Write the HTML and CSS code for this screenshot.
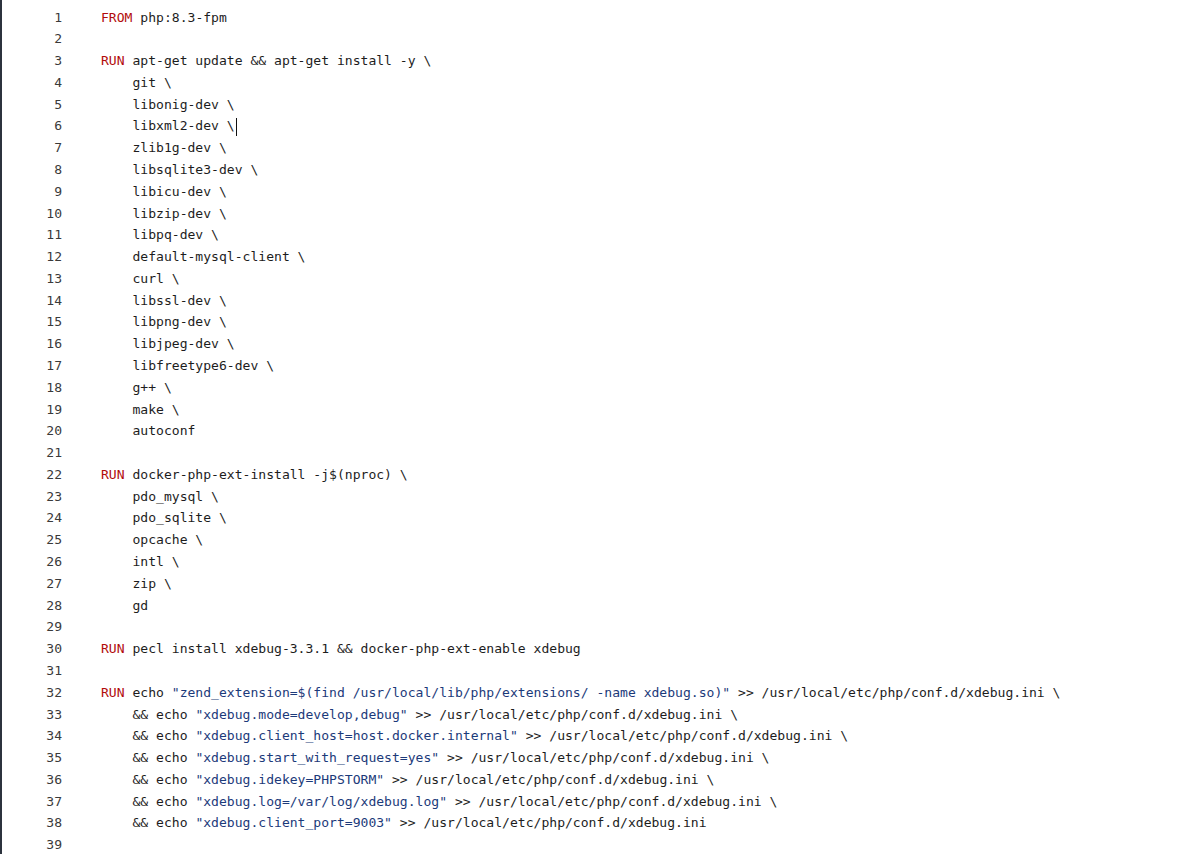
FILE: index.html
```html
<!DOCTYPE html>
<html>
<head>
<meta charset="utf-8">
<link rel="stylesheet" href="styles.css">
</head>
<body>
<div class="editor">
<div class="line"><span class="ln">1</span><span class="code"><span class="kw">FROM</span> php:8.3-fpm</span></div>
<div class="line"><span class="ln">2</span><span class="code"></span></div>
<div class="line"><span class="ln">3</span><span class="code"><span class="kw">RUN</span> apt-get update &amp;&amp; apt-get install -y \</span></div>
<div class="line"><span class="ln">4</span><span class="code">    git \</span></div>
<div class="line"><span class="ln">5</span><span class="code">    libonig-dev \</span></div>
<div class="line"><span class="ln">6</span><span class="code">    libxml2-dev \<span class="cursor"></span></span></div>
<div class="line"><span class="ln">7</span><span class="code">    zlib1g-dev \</span></div>
<div class="line"><span class="ln">8</span><span class="code">    libsqlite3-dev \</span></div>
<div class="line"><span class="ln">9</span><span class="code">    libicu-dev \</span></div>
<div class="line"><span class="ln">10</span><span class="code">    libzip-dev \</span></div>
<div class="line"><span class="ln">11</span><span class="code">    libpq-dev \</span></div>
<div class="line"><span class="ln">12</span><span class="code">    default-mysql-client \</span></div>
<div class="line"><span class="ln">13</span><span class="code">    curl \</span></div>
<div class="line"><span class="ln">14</span><span class="code">    libssl-dev \</span></div>
<div class="line"><span class="ln">15</span><span class="code">    libpng-dev \</span></div>
<div class="line"><span class="ln">16</span><span class="code">    libjpeg-dev \</span></div>
<div class="line"><span class="ln">17</span><span class="code">    libfreetype6-dev \</span></div>
<div class="line"><span class="ln">18</span><span class="code">    g++ \</span></div>
<div class="line"><span class="ln">19</span><span class="code">    make \</span></div>
<div class="line"><span class="ln">20</span><span class="code">    autoconf</span></div>
<div class="line"><span class="ln">21</span><span class="code"></span></div>
<div class="line"><span class="ln">22</span><span class="code"><span class="kw">RUN</span> docker-php-ext-install -j$(nproc) \</span></div>
<div class="line"><span class="ln">23</span><span class="code">    pdo_mysql \</span></div>
<div class="line"><span class="ln">24</span><span class="code">    pdo_sqlite \</span></div>
<div class="line"><span class="ln">25</span><span class="code">    opcache \</span></div>
<div class="line"><span class="ln">26</span><span class="code">    intl \</span></div>
<div class="line"><span class="ln">27</span><span class="code">    zip \</span></div>
<div class="line"><span class="ln">28</span><span class="code">    gd</span></div>
<div class="line"><span class="ln">29</span><span class="code"></span></div>
<div class="line"><span class="ln">30</span><span class="code"><span class="kw">RUN</span> pecl install xdebug-3.3.1 &amp;&amp; docker-php-ext-enable xdebug</span></div>
<div class="line"><span class="ln">31</span><span class="code"></span></div>
<div class="line"><span class="ln">32</span><span class="code"><span class="kw">RUN</span> echo <span class="str">"zend_extension=$(find /usr/local/lib/php/extensions/ -name xdebug.so)"</span> &gt;&gt; /usr/local/etc/php/conf.d/xdebug.ini \</span></div>
<div class="line"><span class="ln">33</span><span class="code">    &amp;&amp; echo <span class="str">"xdebug.mode=develop,debug"</span> &gt;&gt; /usr/local/etc/php/conf.d/xdebug.ini \</span></div>
<div class="line"><span class="ln">34</span><span class="code">    &amp;&amp; echo <span class="str">"xdebug.client_host=host.docker.internal"</span> &gt;&gt; /usr/local/etc/php/conf.d/xdebug.ini \</span></div>
<div class="line"><span class="ln">35</span><span class="code">    &amp;&amp; echo <span class="str">"xdebug.start_with_request=yes"</span> &gt;&gt; /usr/local/etc/php/conf.d/xdebug.ini \</span></div>
<div class="line"><span class="ln">36</span><span class="code">    &amp;&amp; echo <span class="str">"xdebug.idekey=PHPSTORM"</span> &gt;&gt; /usr/local/etc/php/conf.d/xdebug.ini \</span></div>
<div class="line"><span class="ln">37</span><span class="code">    &amp;&amp; echo <span class="str">"xdebug.log=/var/log/xdebug.log"</span> &gt;&gt; /usr/local/etc/php/conf.d/xdebug.ini \</span></div>
<div class="line"><span class="ln">38</span><span class="code">    &amp;&amp; echo <span class="str">"xdebug.client_port=9003"</span> &gt;&gt; /usr/local/etc/php/conf.d/xdebug.ini</span></div>
<div class="line"><span class="ln">39</span><span class="code"></span></div>
</div>
</body>
</html>
```

FILE: styles.css
```css
html, body {
  margin: 0;
  padding: 0;
  background: #ffffff;
}

.editor {
  height: 854px;
  box-sizing: border-box;
  border-left: 2px solid #2c323d;
  padding-top: 6.5px;
  font-family: "DejaVu Sans Mono", "Liberation Mono", monospace;
  font-size: 13.07px;
  color: #1d1d1d;
  overflow: hidden;
}

.line {
  display: flex;
  height: 21.79px;
  line-height: 21.79px;
  white-space: pre;
}

.ln {
  width: 60px;
  flex: none;
  text-align: right;
  color: #3a3a3a;
}

.code {
  padding-left: 39px;
}

.kw {
  color: #b20c0c;
}

.str {
  color: #1c3a7a;
}

.cursor {
  display: inline-block;
  width: 0;
  height: 18px;
  border-left: 1.2px solid #111;
  vertical-align: middle;
  margin-left: 1px;
}
```
